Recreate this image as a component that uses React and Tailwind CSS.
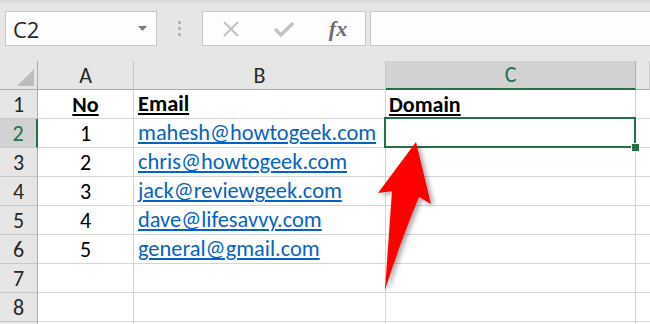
const rows = [
  { n: 1, a: 'No', b: 'Email', c: 'Domain', head: true },
  { n: 2, a: '1', b: 'mahesh@howtogeek.com' },
  { n: 3, a: '2', b: 'chris@howtogeek.com' },
  { n: 4, a: '3', b: 'jack@reviewgeek.com' },
  { n: 5, a: '4', b: 'dave@lifesavvy.com' },
  { n: 6, a: '5', b: 'general@gmail.com' },
  { n: 7 },
  { n: 8 },
  { n: 9, blank: true },
]

const cellFont = { fontFamily: 'Calibri, Carlito, Lato, "Liberation Sans", sans-serif' }

export default function App() {
  return (
    <div className="relative w-[650px] h-[324px] overflow-hidden bg-white" style={cellFont}>
      <Toolbar />
      <Sheet />
      <Arrow />
    </div>
  )
}

function Toolbar() {
  return (
    <div className="h-[61px] bg-[#e6e6e6] border-t-[3px] border-[#dcdcdc] flex items-start pt-[8px] pl-[5px]">
      <div className="w-[152px] h-[35px] bg-[#fdfdfd] border border-[#c6c6c6] flex items-center justify-between pl-[7px] pr-[9px]">
        <span className="text-[22px] text-[#262626] leading-none" style={{ fontFamily: '"Open Sans", "Noto Sans", sans-serif' }}>C2</span>
        <svg width="9" height="5" viewBox="0 0 9 5"><path d="M0 0 L9 0 L4.5 5 Z" fill="#7a7a7a" /></svg>
      </div>
      <div className="w-[45px] h-[35px] flex flex-col items-center justify-center gap-[3px]">
        <span className="w-[3px] h-[3px] bg-[#b4b4b4]" />
        <span className="w-[3px] h-[3px] bg-[#b4b4b4]" />
        <span className="w-[3px] h-[3px] bg-[#b4b4b4]" />
      </div>
      <div className="w-[164px] h-[35px] bg-[#fdfdfd] border border-[#c6c6c6] flex items-center">
        <div className="w-[54px] flex justify-center pl-[2px]">
          <svg width="18" height="18" viewBox="0 0 18 18"><path d="M2 2 L16 16 M16 2 L2 16" stroke="#c3c3c3" strokeWidth="2.2" /></svg>
        </div>
        <div className="w-[54px] flex justify-center">
          <svg width="20" height="16" viewBox="0 0 20 16"><path d="M1 8 L7 14 L19 2" stroke="#c3c3c3" strokeWidth="3.4" fill="none" /></svg>
        </div>
        <div className="w-[54px] flex justify-center">
          <span className="text-[22px] italic font-bold text-[#6e6e6e] leading-none" style={{ fontFamily: '"Liberation Serif", serif' }}>fx</span>
        </div>
      </div>
      <div className="ml-[4px] flex-1 h-[35px] bg-[#fdfdfd] border border-[#c6c6c6] border-r-0" />
    </div>
  )
}

function HeaderCell({ w, children, active }) {
  return (
    <div
      className={
        active
          ? `h-[29px] ${w} shrink-0 bg-[#d2d2d2] border-r border-[#ababab] border-b-2 border-b-[#217346] flex items-center justify-center text-[22px] text-[#217346]`
          : `h-[29px] ${w} shrink-0 bg-[#e6e6e6] border-r border-[#c8c8c8] border-b border-b-[#ababab] flex items-center justify-center text-[22px] text-[#262626]`
      }
    >
      {children}
    </div>
  )
}

function Sheet() {
  return (
    <div>
      <div className="flex">
        <div className="h-[29px] w-[38px] shrink-0 bg-[#e6e6e6] border-r border-[#ababab] border-b border-b-[#ababab] flex items-end justify-end p-[3px]">
          <svg width="17" height="17" viewBox="0 0 17 17"><path d="M17 0 L17 17 L0 17 Z" fill="#bdbdbd" /></svg>
        </div>
        <HeaderCell w="w-[96px]">A</HeaderCell>
        <HeaderCell w="w-[252px]">B</HeaderCell>
        <HeaderCell w="w-[250px]" active>C</HeaderCell>
        <HeaderCell w="flex-1"></HeaderCell>
      </div>
      {rows.map((r) => (
        <div key={r.n} className="flex">
          <div
            className={
              r.n === 2
                ? 'h-[29px] w-[38px] shrink-0 bg-[#d2d2d2] border-r-2 border-[#217346] border-b border-b-[#c8c8c8] flex items-center justify-center text-[22px] text-[#217346]'
                : 'h-[29px] w-[38px] shrink-0 bg-[#e6e6e6] border-r border-[#ababab] border-b border-b-[#c8c8c8] flex items-center justify-center text-[22px] text-[#262626]'
            }
          >
            {r.blank ? '' : r.n}
          </div>
          <div className={`h-[29px] w-[96px] shrink-0 border-r border-b border-[#d4d4d4] flex items-center justify-center text-[22px] text-black ${r.head ? 'font-bold underline' : ''}`}>
            {r.a}
          </div>
          <div className={`h-[29px] w-[252px] shrink-0 border-r border-b border-[#d4d4d4] flex items-center pl-[4px] text-[22.4px] underline whitespace-nowrap ${r.head ? 'font-bold text-black' : 'text-[#0563c1]'}`}>
            {r.b}
          </div>
          <div className={`${r.n === 2 ? 'relative z-10' : ''} h-[29px] w-[250px] shrink-0 border-r border-b border-[#d4d4d4] flex items-center pl-[3px] text-[22px] font-bold underline text-black`}>
            {r.c}
            {r.n === 2 && (
              <div className="absolute left-[-2px] top-[-2px] w-[252px] h-[31px] border-2 border-[#217346]">
                <span className="absolute right-[-6px] bottom-[-6px] w-[9px] h-[9px] bg-[#217346] border border-white" />
              </div>
            )}
          </div>
          <div className="h-[29px] flex-1 border-b border-[#d4d4d4]" />
        </div>
      ))}
    </div>
  )
}

function Arrow() {
  return (
    <svg className="absolute left-0 top-0 z-20 pointer-events-none" width="650" height="324" viewBox="0 0 650 324">
      <defs>
        <filter id="sh" x="-50%" y="-50%" width="200%" height="200%">
          <feDropShadow dx="3" dy="2" stdDeviation="2.5" floodColor="#000" floodOpacity="0.35" />
        </filter>
      </defs>
      <path
        d="M416 142 L431 204 L419 197 Q401 240 385 290 L392 191 L378 193 Z"
        fill="#ff0000"
        filter="url(#sh)"
      />
    </svg>
  )
}
